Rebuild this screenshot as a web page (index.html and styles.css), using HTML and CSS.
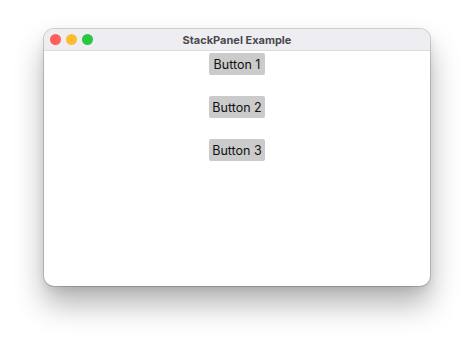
FILE: index.html
```html
<!DOCTYPE html>
<html>
<head>
<meta charset="utf-8">
<link rel="stylesheet" href="styles.css">
</head>
<body>
<div class="window">
  <div class="titlebar">
    <div class="lights">
      <span class="light red"></span>
      <span class="light yellow"></span>
      <span class="light green"></span>
    </div>
    <div class="title">StackPanel Example</div>
  </div>
  <div class="content">
    <button class="btn">Button 1</button>
    <button class="btn">Button 2</button>
    <button class="btn">Button 3</button>
  </div>
</div>
</body>
</html>
```
FILE: styles.css
```css
html, body {
  margin: 0;
  padding: 0;
  background: #ffffff;
}
body {
  box-sizing: border-box;
  min-height: 345px;
  padding: 29px 0 0 44px;
  font-family: Inter, "Liberation Sans", sans-serif;
}
.window {
  width: 386px;
  height: 257px;
  border-radius: 10px;
  background: #ffffff;
  overflow: hidden;
  box-shadow: 0 0 0 1px rgba(0,0,0,0.16), 0 18px 30px rgba(0,0,0,0.30), 0 4px 10px rgba(0,0,0,0.08);
  display: flex;
  flex-direction: column;
}
.titlebar {
  height: 21px;
  background: #eeeef2;
  border-bottom: 1px solid #dcdce0;
  position: relative;
  display: flex;
  align-items: center;
  justify-content: center;
  flex-shrink: 0;
}
.lights {
  position: absolute;
  left: 6px;
  top: 5px;
  display: flex;
  gap: 5px;
}
.light {
  width: 11px;
  height: 11px;
  border-radius: 50%;
  display: block;
}
.red { background: #fe5f57; }
.yellow { background: #febc2e; }
.green { background: #28c840; }
.title {
  font-size: 11px;
  font-weight: 700;
  color: #4a4a4e;
}
.content {
  display: flex;
  flex-direction: column;
  align-items: center;
  gap: 21px;
  padding-top: 2px;
}
.btn {
  width: 56px;
  height: 22px;
  border: none;
  border-radius: 2px;
  background: #cbcbcb;
  font-family: Inter, "Liberation Sans", sans-serif;
  font-size: 12.5px;
  color: #111;
  padding: 0;
  margin: 0;
}
```
